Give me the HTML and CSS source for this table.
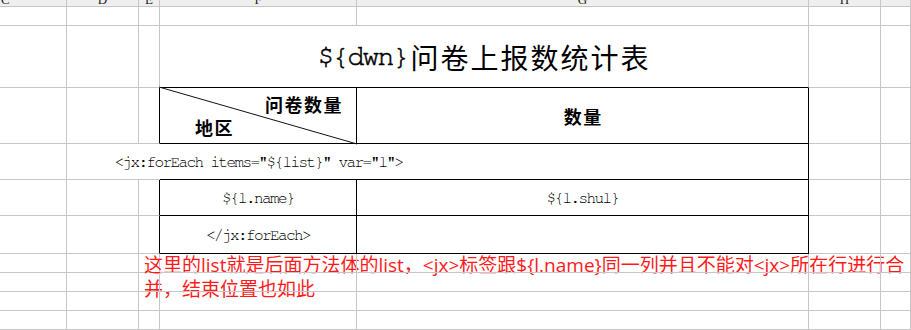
FILE: index.html
```html
<!DOCTYPE html>
<html lang="zh-CN">
<head>
<meta charset="utf-8">
<title>问卷上报数统计表</title>
<link rel="stylesheet" href="styles.css">
</head>
<body>
<div class="sheet">
  <!-- column header row -->
  <div class="c hd hd-first"><span>C</span></div>
  <div class="c hd"><span>D</span></div>
  <div class="c hd"><span>E</span></div>
  <div class="c hd"><span>F</span></div>
  <div class="c hd"><span>G</span></div>
  <div class="c hd"><span>H</span></div>
  <div class="c hd"></div>

  <!-- row 1 -->
  <div class="c"></div><div class="c"></div><div class="c"></div><div class="c"></div><div class="c"></div><div class="c"></div><div class="c"></div>

  <!-- title row -->
  <div class="c"></div><div class="c"></div><div class="c"></div>
  <div class="c title bb"><span class="title-m">${dwn}</span><span class="title-c">问卷上报数统计表</span></div>
  <div class="c"></div><div class="c"></div>

  <!-- table header -->
  <div class="c"></div><div class="c"></div><div class="c br"></div>
  <div class="c diag br bb">
    <svg class="diag-line" viewBox="0 0 100 100" preserveAspectRatio="none"><line x1="0" y1="0" x2="100" y2="100" stroke="#111" stroke-width="1" vector-effect="non-scaling-stroke"/></svg>
    <div class="diag-top">问卷数量</div>
    <div class="diag-bottom">地区</div>
  </div>
  <div class="c center head br bb">数量</div>
  <div class="c"></div><div class="c"></div>

  <!-- forEach start -->
  <div class="c"></div><div class="c nr"></div><div class="c nr"></div>
  <div class="c center mono nr bb">&lt;jx:forEach items="${list}" var="l"&gt;</div>
  <div class="c br bb"></div>
  <div class="c"></div><div class="c"></div>

  <!-- data row -->
  <div class="c"></div><div class="c"></div><div class="c br"></div>
  <div class="c center mono br bb">${l.name}</div>
  <div class="c center mono br bb">${l.shul}</div>
  <div class="c"></div><div class="c"></div>

  <!-- forEach end -->
  <div class="c"></div><div class="c"></div><div class="c br"></div>
  <div class="c center mono br bb">&lt;/jx:forEach&gt;</div>
  <div class="c br bb"></div>
  <div class="c"></div><div class="c"></div>

  <!-- note rows -->
  <div class="c"></div><div class="c"></div>
  <div class="c"><p class="note">这里的list就是后面方法体的list，&lt;jx&gt;标签跟${l.name}同一列并且不能对&lt;jx&gt;所在行进行合<br>并，结束位置也如此</p></div>
  <div class="c"></div><div class="c"></div><div class="c"></div><div class="c"></div>

  <div class="c"></div><div class="c"></div><div class="c"></div><div class="c"></div><div class="c"></div><div class="c"></div><div class="c"></div>
  <div class="c"></div><div class="c"></div><div class="c"></div><div class="c"></div><div class="c"></div><div class="c"></div><div class="c"></div>
  <div class="c"></div><div class="c"></div><div class="c"></div><div class="c"></div><div class="c"></div><div class="c"></div><div class="c"></div>
</div>
</body>
</html>
```

FILE: styles.css
```css
* {
  box-sizing: border-box;
  margin: 0;
  padding: 0;
}

html, body {
  background: #fff;
}

body {
  width: 911px;
  height: 330px;
  overflow: hidden;
  font-family: "Noto Sans CJK SC", sans-serif;
  color: #000;
}

.sheet {
  display: grid;
  grid-template-columns: 67px 72px 21px 197px 452px 72px 30px;
  grid-template-rows: 7px 19px 62px 56px 36px 36px 38px 19px 19px 19px 19px;
  width: 911px;
}

.c {
  border-right: 1px solid #c6c6c6;
  border-bottom: 1px solid #c6c6c6;
  min-width: 0;
}

.bb { border-bottom-color: #000; }
.br { border-right-color: #000; }
.nr { border-right: none; }

/* column header */
.hd {
  background: #efefef;
  overflow: hidden;
  display: flex;
  justify-content: center;
  font-family: "Liberation Serif", serif;
  font-size: 13px;
  line-height: 12px;
  color: #222;
}

.hd span {
  margin-top: -6px;
}

.hd-first {
  justify-content: flex-start;
  padding-left: 1px;
}

/* title */
.title {
  grid-column: span 2;
  display: flex;
  align-items: center;
  justify-content: center;
  white-space: nowrap;
  line-height: 28px;
}

.title-m {
  font-family: "Nimbus Mono PS", "Nimbus Mono L", "FreeMono", "Liberation Mono", monospace;
  font-size: 28px;
  letter-spacing: -1.8px;
  -webkit-text-stroke: 0.5px #000;
}

.title-c {
  font-family: "Noto Sans CJK SC", sans-serif;
  font-size: 28px;
  letter-spacing: 2px;
  margin-left: 3px;
}

/* diagonal header */
.diag {
  position: relative;
  display: flex;
  flex-direction: column;
  padding: 5px 13px 0 35px;
  font-size: 18px;
  font-weight: 700;
  line-height: 23px;
  letter-spacing: 1.5px;
}

.diag-line {
  position: absolute;
  top: -1px;
  left: -1px;
  width: calc(100% + 2px);
  height: calc(100% + 2px);
  overflow: visible;
}

.diag-top {
  text-align: right;
}

.diag-bottom {
  text-align: left;
}

.center {
  display: flex;
  align-items: center;
  justify-content: center;
  white-space: nowrap;
}

.head {
  font-size: 18px;
  font-weight: 700;
  letter-spacing: 1.5px;
  padding-left: 1.5px;
}

.mono {
  font-family: "Nimbus Mono PS", "Nimbus Mono L", "FreeMono", "Liberation Mono", monospace;
  font-size: 16px;
  letter-spacing: -1.6px;
  color: #000;
}

/* red note */
.note {
  margin-top: -1px;
  padding-left: 5px;
  font-family: "Open Sans", "Noto Sans CJK SC", sans-serif;
  font-size: 19px;
  line-height: 24px;
  color: #ff1a1a;
  white-space: nowrap;
}
```
